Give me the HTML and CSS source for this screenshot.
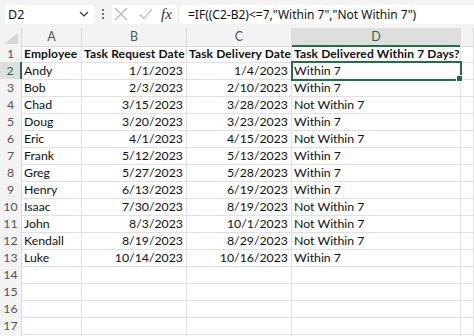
FILE: index.html
```html
<!DOCTYPE html>
<html lang="en">
<head>
    <meta charset="UTF-8">
    <title>Task Delivery Sheet</title>
    <link rel="stylesheet" href="styles.css">
</head>
<body>
    <div class="toolbar">
        <div class="namebox">
            <span>D2</span>
            <svg class="chevron" width="10" height="6" viewBox="0 0 10 6"><path d="M1 1 L5 5 L9 1" fill="none" stroke="#333" stroke-width="1.2"/></svg>
        </div>
        <div class="dots"><i></i><i></i><i></i></div>
        <div class="fxbox">
            <svg width="14" height="14" viewBox="0 0 14 14"><path d="M1 1 L13 13 M13 1 L1 13" stroke="#b4b4b4" stroke-width="1.1"/></svg>
            <svg width="14" height="14" viewBox="0 0 14 14"><path d="M1 7.5 L5 11.5 L13 2" fill="none" stroke="#b4b4b4" stroke-width="1.1"/></svg>
            <span class="fx">fx</span>
        </div>
        <div class="formula">=IF((C2-B2)&lt;=7,"Within 7","Not Within 7")</div>
    </div>

    <div class="sheet">
        <div class="row head">
            <div class="corner"><svg width="14" height="11" viewBox="0 0 14 11"><path d="M14 0 L14 11 L0 11 Z" fill="#d6d6d6"/></svg></div>
            <div class="col">A</div>
            <div class="col">B</div>
            <div class="col">C</div>
            <div class="col sel">D</div>
            <div class="col"></div>
        </div>
        <div class="row bold">
            <div class="num">1</div>
            <div class="cell">Employee</div>
            <div class="cell">Task Request Date</div>
            <div class="cell">Task Delivery Date</div>
            <div class="cell">Task Delivered Within 7 Days?</div>
            <div class="cell"></div>
        </div>
        <div class="row">
            <div class="num sel">2</div>
            <div class="cell">Andy</div>
            <div class="cell r">1/1/2023</div>
            <div class="cell r">1/4/2023</div>
            <div class="cell active">Within 7</div>
            <div class="cell"></div>
        </div>
        <div class="row">
            <div class="num">3</div>
            <div class="cell">Bob</div>
            <div class="cell r">2/3/2023</div>
            <div class="cell r">2/10/2023</div>
            <div class="cell">Within 7</div>
            <div class="cell"></div>
        </div>
        <div class="row">
            <div class="num">4</div>
            <div class="cell">Chad</div>
            <div class="cell r">3/15/2023</div>
            <div class="cell r">3/28/2023</div>
            <div class="cell">Not Within 7</div>
            <div class="cell"></div>
        </div>
        <div class="row">
            <div class="num">5</div>
            <div class="cell">Doug</div>
            <div class="cell r">3/20/2023</div>
            <div class="cell r">3/23/2023</div>
            <div class="cell">Within 7</div>
            <div class="cell"></div>
        </div>
        <div class="row">
            <div class="num">6</div>
            <div class="cell">Eric</div>
            <div class="cell r">4/1/2023</div>
            <div class="cell r">4/15/2023</div>
            <div class="cell">Not Within 7</div>
            <div class="cell"></div>
        </div>
        <div class="row">
            <div class="num">7</div>
            <div class="cell">Frank</div>
            <div class="cell r">5/12/2023</div>
            <div class="cell r">5/13/2023</div>
            <div class="cell">Within 7</div>
            <div class="cell"></div>
        </div>
        <div class="row">
            <div class="num">8</div>
            <div class="cell">Greg</div>
            <div class="cell r">5/27/2023</div>
            <div class="cell r">5/28/2023</div>
            <div class="cell">Within 7</div>
            <div class="cell"></div>
        </div>
        <div class="row">
            <div class="num">9</div>
            <div class="cell">Henry</div>
            <div class="cell r">6/13/2023</div>
            <div class="cell r">6/19/2023</div>
            <div class="cell">Within 7</div>
            <div class="cell"></div>
        </div>
        <div class="row">
            <div class="num">10</div>
            <div class="cell">Isaac</div>
            <div class="cell r">7/30/2023</div>
            <div class="cell r">8/19/2023</div>
            <div class="cell">Not Within 7</div>
            <div class="cell"></div>
        </div>
        <div class="row">
            <div class="num">11</div>
            <div class="cell">John</div>
            <div class="cell r">8/3/2023</div>
            <div class="cell r">10/1/2023</div>
            <div class="cell">Not Within 7</div>
            <div class="cell"></div>
        </div>
        <div class="row">
            <div class="num">12</div>
            <div class="cell">Kendall</div>
            <div class="cell r">8/19/2023</div>
            <div class="cell r">8/29/2023</div>
            <div class="cell">Not Within 7</div>
            <div class="cell"></div>
        </div>
        <div class="row">
            <div class="num">13</div>
            <div class="cell">Luke</div>
            <div class="cell r">10/14/2023</div>
            <div class="cell r">10/16/2023</div>
            <div class="cell">Within 7</div>
            <div class="cell"></div>
        </div>
        <div class="row">
            <div class="num">14</div>
            <div class="cell"></div><div class="cell"></div><div class="cell"></div><div class="cell"></div><div class="cell"></div>
        </div>
        <div class="row">
            <div class="num">15</div>
            <div class="cell"></div><div class="cell"></div><div class="cell"></div><div class="cell"></div><div class="cell"></div>
        </div>
        <div class="row">
            <div class="num">16</div>
            <div class="cell"></div><div class="cell"></div><div class="cell"></div><div class="cell"></div><div class="cell"></div>
        </div>
        <div class="row">
            <div class="num">17</div>
            <div class="cell"></div><div class="cell"></div><div class="cell"></div><div class="cell"></div><div class="cell"></div>
        </div>
        <div class="row">
            <div class="num"></div>
            <div class="cell"></div><div class="cell"></div><div class="cell"></div><div class="cell"></div><div class="cell"></div>
        </div>
    </div>
</body>
</html>
```

FILE: styles.css
```css
* {
  margin: 0;
  padding: 0;
  box-sizing: border-box;
}
body {
  background: #fff;
  font-family: Lato, "Open Sans", sans-serif;
  color: #111;
  overflow: hidden;
}

/* formula bar */
.toolbar {
  display: flex;
  align-items: center;
  height: 28px;
  background: #f3f3f3;
  padding-left: 5px;
  font-family: "Noto Sans", "Open Sans", sans-serif;
}
.namebox {
  display: flex;
  align-items: center;
  justify-content: space-between;
  width: 90px;
  height: 19px;
  background: #fff;
  border-radius: 4px;
  padding: 0 6px 0 3px;
  font-size: 12.5px;
}
.dots {
  display: flex;
  flex-direction: column;
  gap: 2px;
  margin: 0 8px 0 7px;
}
.dots i {
  display: block;
  width: 2px;
  height: 2px;
  background: #444;
  border-radius: 1px;
}
.fxbox {
  display: flex;
  align-items: center;
  width: 65px;
  height: 19px;
  background: #fff;
  border-radius: 4px;
  padding-left: 2px;
  gap: 11px;
}
.fx {
  font-family: "Liberation Serif", "DejaVu Serif", serif;
  font-style: italic;
  font-size: 15px;
  color: #333;
  margin-left: -3px;
}
.formula {
  flex: 1;
  height: 19px;
  margin-left: 3px;
  background: #fff;
  border-radius: 4px 0 0 4px;
  padding-left: 8px;
  font-size: 12px;
  line-height: 19px;
  white-space: nowrap;
}

/* grid */
.row {
  display: grid;
  grid-template-columns: 22px 60px 105px 105px 169px 1fr;
  height: 17px;
}
.row > div {
  border-right: 1px solid #e1e1e1;
  border-bottom: 1px solid #e1e1e1;
  font-size: 12.3px;
  line-height: 16px;
  padding-top: 1px;
  white-space: nowrap;
  overflow: visible;
}
.head > div {
  background: #f3f3f3;
  color: #555;
  text-align: center;
  border-color: #dadada;
  font-size: 12.5px;
}
.head .corner {
  display: flex;
  align-items: flex-end;
  justify-content: center;
  padding-bottom: 2px;
}
.head .sel {
  background: #dedede;
  color: #1e6d42;
  border-bottom: 2px solid #1e7145;
}
.num {
  background: #f3f3f3;
  color: #555;
  text-align: center;
  border-color: #dadada !important;
}
.num.sel {
  background: #dedede;
  color: #1e6d42;
  border-right: 2px solid #1e7145 !important;
}
.cell {
  padding: 1px 3px 0 2px;
}
.cell.r {
  text-align: right;
}
.bold .cell {
  font-weight: bold;
  font-size: 12px;
  letter-spacing: 0.12px;
}
.active {
  position: relative;
  outline: 2px solid #1e7145;
  outline-offset: -1px;
}
.active::after {
  content: "";
  position: absolute;
  right: -3px;
  bottom: -3px;
  width: 5px;
  height: 5px;
  background: #1e7145;
  border: 1px solid #fff;
}
```
